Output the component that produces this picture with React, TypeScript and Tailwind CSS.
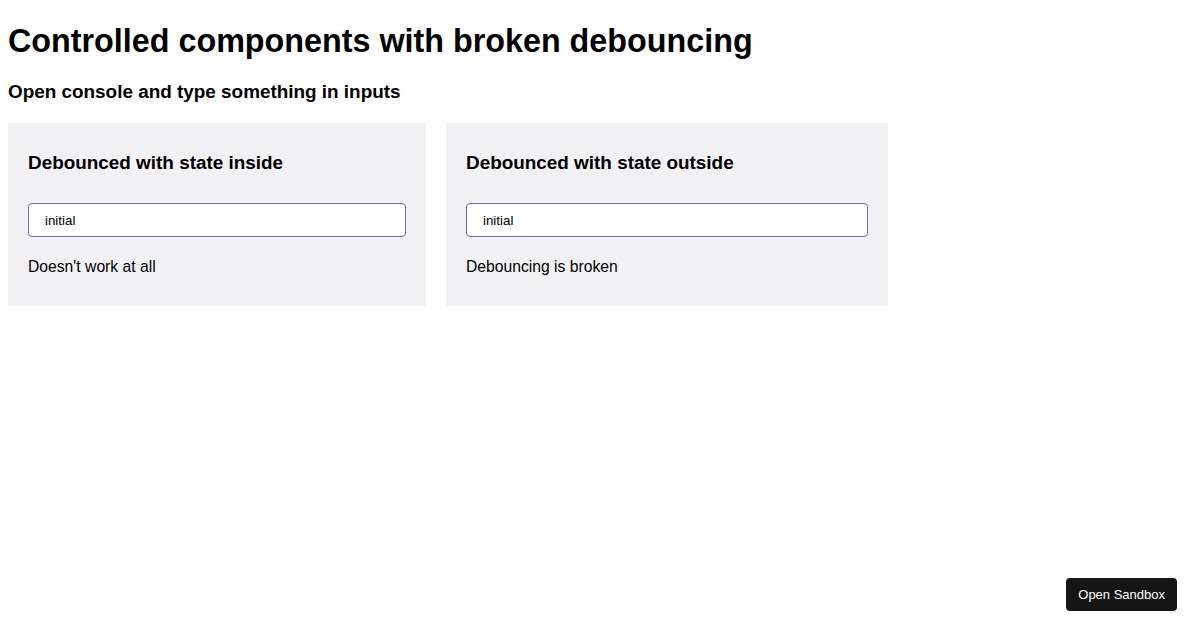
export default function App() {
    return (
        <div className="min-h-[630px] bg-white p-2 text-black font-['Liberation_Sans',Arial,sans-serif]">
            <h1 className="text-[32.3px] font-bold leading-[37px] mt-[15px]">Controlled components with broken debouncing</h1>
            <h3 className="text-[18.9px] font-bold leading-[22px] mt-[21px]">Open console and type something in inputs</h3>

            <div className="flex gap-5 mt-[20px]">
                <Card title="Debounced with state inside" note="Doesn't work at all" width="w-[418px]" />
                <Card title="Debounced with state outside" note="Debouncing is broken" width="w-[442px]" />
            </div>

            {/* sandbox button */}
            <button className="fixed right-[23px] bottom-[19px] h-[33px] px-[12px] rounded bg-[#151515] text-white text-[13px] font-['Liberation_Sans',Arial,sans-serif]">
                Open Sandbox
            </button>
        </div>
    );
}

function Card({ title, note, width }: { title: string; note: string; width: string }) {
    return (
        <div className={`${width} bg-[#f2f2f4] px-5 pt-[29px] pb-[30px]`}>
            <h3 className="text-[18.9px] font-bold leading-[22px]">{title}</h3>
            <input
                type="text"
                defaultValue="initial"
                className="mt-[29px] block w-full h-[34px] px-4 bg-white border border-[#6a73a3] rounded text-[13.33px] text-black outline-none"
            />
            <p className="mt-[21px] text-[15.7px] leading-[18px]">{note}</p>
        </div>
    );
}
